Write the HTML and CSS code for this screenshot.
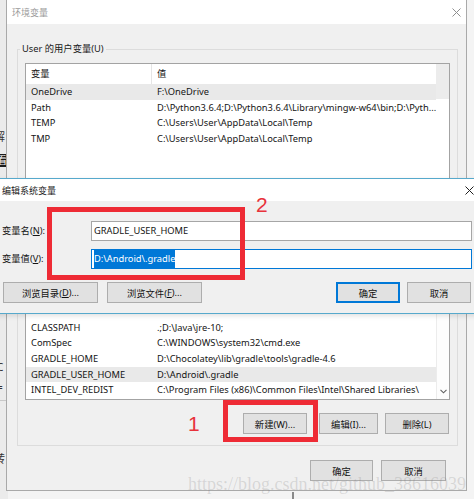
FILE: index.html
```html
<!DOCTYPE html>
<html>
<head>
<meta charset="utf-8">
<link rel="stylesheet" href="styles.css">
</head>
<body>
<div class="desk">
  <div class="bgwin">
    <span class="bgg bg1">解</span>
    <span class="bgblock"><span>看</span></span>
    <span class="bgg bg2">C</span>
    <span class="bgg bg3">=</span>
    <span class="bgline"></span>
    <span class="bgg bg4">转</span>
  </div>

  <div class="win-main">
    <div class="titlebar">
      <span class="title">环境变量</span>
      <svg class="x x-main" width="9" height="9" viewBox="0 0 9 9"><path d="M0.5 0.5 L8.5 8.5 M8.5 0.5 L0.5 8.5"/></svg>
    </div>
    <div class="main-body">
      <fieldset class="group g-user">
        <legend>User 的用户变量(U)</legend>
        <div class="list list-user">
          <div class="list-main">
            <div class="lhead"><span class="c1">变量</span><span class="c2">值</span></div>
            <div class="row hl"><span class="c1">OneDrive</span><span class="c2">F:\OneDrive</span></div>
            <div class="row"><span class="c1">Path</span><span class="c2">D:\Python3.6.4;D:\Python3.6.4\Library\mingw-w64\bin;D:\Pyth...</span></div>
            <div class="row"><span class="c1">TEMP</span><span class="c2">C:\Users\User\AppData\Local\Temp</span></div>
            <div class="row"><span class="c1">TMP</span><span class="c2">C:\Users\User\AppData\Local\Temp</span></div>
          </div>
          <div class="side side-user"><span class="corner"></span></div>
        </div>
      </fieldset>

      <fieldset class="group g-sys">
        <div class="list list-sys">
          <div class="list-main bottom">
            <div class="row"></div>
            <div class="row"><span class="c1">CLASSPATH</span><span class="c2">.;D:\Java\jre-10;</span></div>
            <div class="row"><span class="c1">ComSpec</span><span class="c2">C:\WINDOWS\system32\cmd.exe</span></div>
            <div class="row"><span class="c1">GRADLE_HOME</span><span class="c2">D:\Chocolatey\lib\gradle\tools\gradle-4.6</span></div>
            <div class="row hl"><span class="c1">GRADLE_USER_HOME</span><span class="c2">D:\Android\.gradle</span></div>
            <div class="row"><span class="c1">INTEL_DEV_REDIST</span><span class="c2">C:\Program Files (x86)\Common Files\Intel\Shared Libraries\</span></div>
          </div>
          <div class="side side-sys">
            <svg class="chev" width="7" height="5" viewBox="0 0 7 5"><path d="M0.5 0.8 L3.5 3.8 L6.5 0.8"/></svg>
          </div>
        </div>
        <div class="sys-btns">
          <button class="btn b-new">新建(W)...</button>
          <button class="btn b-edit">编辑(I)...</button>
          <button class="btn b-del">删除(L)</button>
        </div>
      </fieldset>

      <div class="main-footer">
        <button class="btn b-ok">确定</button>
        <button class="btn b-cancel">取消</button>
      </div>
    </div>
  </div>

  <div class="win-edit">
    <div class="edit-title">
      <span>编辑系统变量</span>
      <svg class="x x-edit" width="9" height="9" viewBox="0 0 9 9"><path d="M0.5 0.5 L8.5 8.5 M8.5 0.5 L0.5 8.5"/></svg>
    </div>
    <div class="edit-body">
      <div class="form">
        <span class="lbl">变量名(<u>N</u>):</span>
        <div class="field">GRADLE_USER_HOME</div>
        <span class="lbl">变量值(<u>V</u>):</span>
        <div class="field focus"><span class="selected">D:\Android\.gradle</span></div>
      </div>
      <div class="edit-btns">
        <div class="grp grp-left">
          <button class="btn b-browse">浏览目录(<u>D</u>)...</button>
          <button class="btn b-browse">浏览文件(<u>F</u>)...</button>
        </div>
        <div class="grp grp-right">
          <button class="btn b-dlg default">确定</button>
          <button class="btn b-dlg">取消</button>
        </div>
      </div>
    </div>
  </div>

  <div class="mark mark-a"></div>
  <span class="num num-2">2</span>
  <div class="mark mark-b"></div>
  <span class="num num-1">1</span>

  <span class="grip"></span>
  <div class="watermark">https://blog.csdn.net/github_38616039</div>
</div>
</body>
</html>
```

FILE: styles.css
```css
* { box-sizing: border-box; }
html, body { margin: 0; padding: 0; }
body {
  width: 474px;
  height: 499px;
  overflow: hidden;
  font-family: "Noto Sans", "Noto Sans CJK SC", sans-serif;
  font-size: 9.3px;
  color: #141414;
  background: #f2f2f2;
}
.desk {
  position: relative;
  width: 474px;
  height: 499px;
  overflow: hidden;
  background: #f4f4f4;
}

/* background window strip on the left */
.bgwin {
  position: absolute;
  left: 0;
  top: 0;
  width: 8px;
  height: 499px;
  background: #ebebeb;
  overflow: hidden;
}
.bgg {
  position: absolute;
  font-size: 11px;
  line-height: 12px;
  color: #333;
}
.bg1 { left: -6px; top: 131px; }
.bg2 { left: -3px; top: 361px; font-size: 10px; }
.bg3 { left: -3px; top: 381px; font-size: 10px; }
.bg4 { left: -6px; top: 453px; }
.bgblock {
  position: absolute;
  left: 0;
  top: 154px;
  width: 8px;
  height: 13px;
  background: #1c1c1c;
  color: #fff;
  font-size: 10px;
  line-height: 13px;
  overflow: hidden;
}
.bgblock span { margin-left: -3px; }
.bgline {
  position: absolute;
  left: 0;
  top: 400px;
  width: 8px;
  height: 1px;
  background: #c8c8c8;
}

/* main window */
.win-main {
  position: absolute;
  left: 6px;
  top: 0;
  width: 461px;
  height: 491px;
  border: 1px solid #a9a9a9;
  border-top: 0;
  background: #f0f0f0;
  display: flex;
  flex-direction: column;
}
.titlebar {
  flex: none;
  height: 24px;
  background: #fff;
  display: flex;
  align-items: center;
  justify-content: space-between;
  padding: 0 5px 0 5px;
}
.title {
  font-size: 9px;
  color: #9a9a9a;
}
.x path { fill: none; stroke-width: 1; }
.x-main path { stroke: #8f8f8f; }
.x-edit path { stroke: #1e1e1e; }

.main-body {
  flex: 1;
  min-height: 0;
  display: flex;
  flex-direction: column;
  padding: 18px 8px 9px 10px;
}
.group {
  margin: 0;
  min-width: 0;
  border: 1px solid #dcdcdc;
  padding: 7px 7px 0 7px;
}
.group legend {
  padding: 0 2px;
  margin-left: -5px;
  line-height: 14px;
  font-size: 9.3px;
  color: #1a1a1a;
}
.g-user {
  flex: none;
  height: 186px;
  margin-bottom: 11px;
}
.g-sys {
  flex: 1;
  min-height: 0;
  display: flex;
  flex-direction: column;
  padding-bottom: 11px;
}

.list {
  background: #fff;
  border: 1px solid #a3a3a3;
  display: flex;
  overflow: hidden;
}
.list-user { height: 134px; }
.list-sys { flex: 1; min-height: 0; }
.list-main {
  flex: 1;
  min-width: 0;
  display: flex;
  flex-direction: column;
  overflow: hidden;
}
.list-main.bottom {
  justify-content: flex-end;
  padding-bottom: 1px;
}
.side { flex: none; width: 13px; position: relative; }
.side-user .corner {
  display: block;
  height: 35px;
  background: #ececec;
}
.side-sys {
  display: flex;
  flex-direction: column;
  justify-content: flex-end;
  align-items: center;
  padding-bottom: 5px;
  border-left: 1px solid #ececec;
  background: #fdfdfd;
}
.chev path { fill: none; stroke: #606060; stroke-width: 1.1; }

.lhead, .row {
  flex: none;
  display: grid;
  grid-template-columns: 126px 1fr;
  white-space: nowrap;
}
.lhead { height: 20px; line-height: 20px; }
.lhead .c1 { border-right: 1px solid #e5e5e5; }
.row { height: 15.7px; line-height: 15.7px; }
.row.hl { background: #e9e9e9; }
.c1, .c2 {
  padding-left: 5px;
  overflow: hidden;
  white-space: nowrap;
}

.btn {
  font-family: "Noto Sans", "Noto Sans CJK SC", sans-serif;
  font-size: 9.3px;
  color: #111;
  background: #e1e1e1;
  border: 1px solid #adadad;
  height: 21px;
  padding: 0;
  margin: 0;
  display: flex;
  align-items: center;
  justify-content: center;
  white-space: nowrap;
}

.sys-btns {
  flex: none;
  display: flex;
  justify-content: flex-end;
  margin-top: 13px;
  margin-right: 1px;
}
.b-new { width: 64px; }
.b-edit { width: 59px; margin-left: 12px; }
.b-del { width: 64px; margin-left: 7px; }

.main-footer {
  flex: none;
  display: flex;
  justify-content: flex-end;
  gap: 8px;
  margin-top: 14px;
  margin-right: 12px;
}
.b-ok { width: 63px; }
.b-cancel { width: 65px; }

/* edit dialog */
.win-edit {
  position: absolute;
  left: -8px;
  top: 178px;
  width: 488px;
  height: 136px;
  border: 1px solid #56a9cc;
  background: #f0f0f0;
  display: flex;
  flex-direction: column;
  box-shadow: 0 2px 5px rgba(0, 0, 0, 0.12);
}
.edit-title {
  flex: none;
  height: 22px;
  background: #fff;
  display: flex;
  align-items: center;
  justify-content: space-between;
  padding: 0 5px 0 9px;
  font-size: 9px;
  color: #1a1a1a;
}
.edit-body {
  flex: 1;
  display: flex;
  flex-direction: column;
  padding: 20px 7px 10px 9px;
}
.form {
  display: grid;
  grid-template-columns: 89px 1fr;
  grid-auto-rows: 20px;
  row-gap: 8px;
}
.lbl { line-height: 20px; white-space: nowrap; }
.field {
  background: #fff;
  border: 1px solid #a6a6a6;
  padding-left: 2px;
  line-height: 18px;
  white-space: nowrap;
  overflow: hidden;
}
.field.focus { border-color: #0078d7; }
.selected {
  display: inline-block;
  vertical-align: top;
  height: 18px;
  line-height: 18px;
  background: #0078d7;
  color: #fff;
}
.edit-btns {
  display: flex;
  justify-content: space-between;
  margin-top: 13px;
}
.grp { display: flex; }
.grp-left { gap: 9px; margin-left: 1px; }
.grp-right { gap: 7px; margin-right: 1px; }
.b-browse { width: 95px; }
.b-dlg { width: 64px; }
.btn.default {
  border-color: #0078d7;
  box-shadow: inset 0 0 0 1px #0078d7;
}

/* annotations */
.mark {
  position: absolute;
  border: 5px solid #ee2b35;
}
.mark-a { left: 47px; top: 207px; width: 198px; height: 73px; }
.mark-b { left: 223px; top: 400px; width: 95px; height: 42px; }
.num {
  position: absolute;
  font-family: "Liberation Sans", sans-serif;
  font-size: 21px;
  line-height: 21px;
  color: #e8323b;
}
.num-2 { left: 256px; top: 194px; }
.num-1 { left: 188px; top: 413px; }

.grip {
  position: absolute;
  left: 292px;
  top: 492px;
  width: 2px;
  height: 7px;
  background: #8a8a8a;
}
.watermark {
  position: absolute;
  left: 188px;
  top: 475px;
  font-family: "Liberation Serif", serif;
  font-size: 18px;
  line-height: 18px;
  color: rgba(120, 120, 120, 0.22);
  white-space: nowrap;
}
```
